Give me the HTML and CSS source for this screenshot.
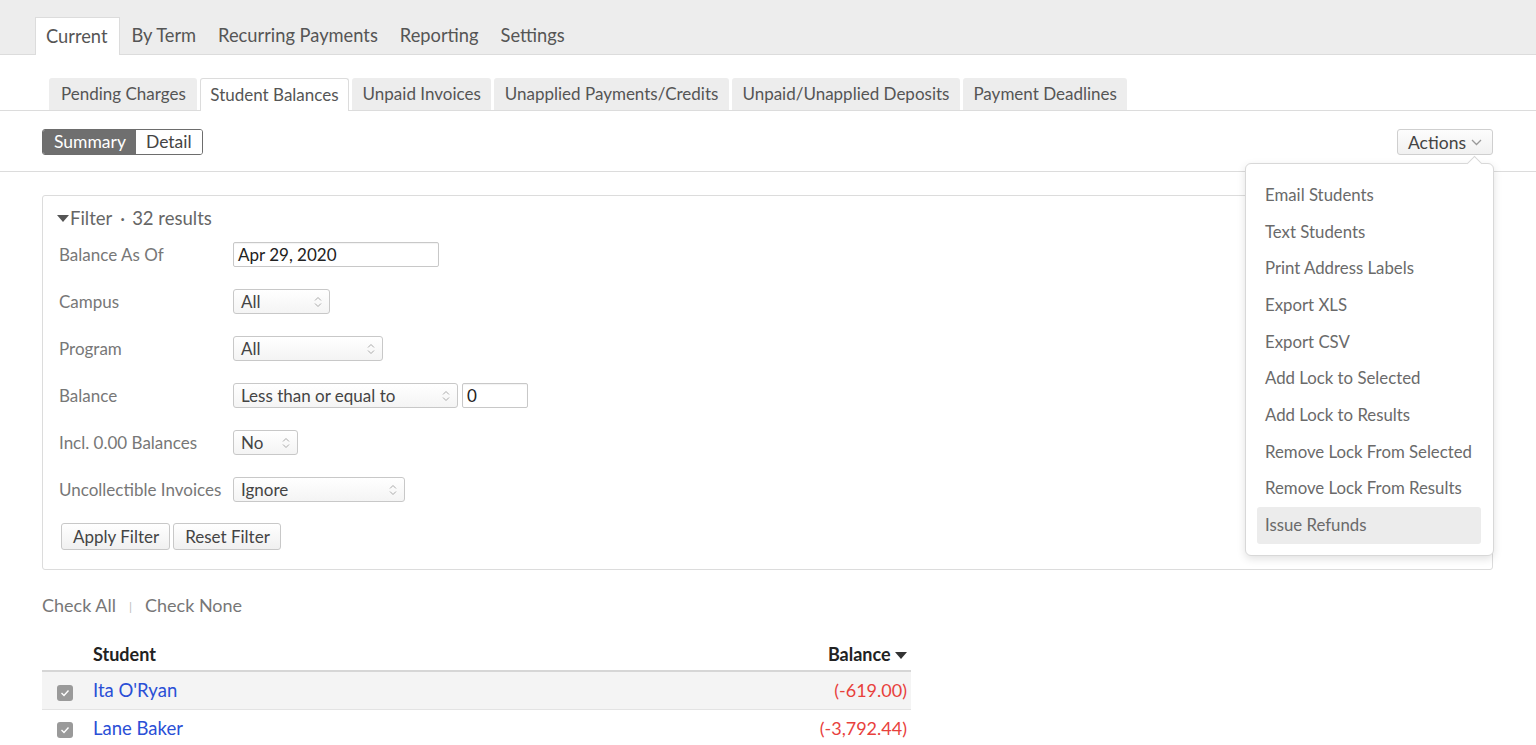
FILE: index.html
```html
<!DOCTYPE html>
<html lang="en">
<head>
<meta charset="utf-8">
<title>Student Balances</title>
<link rel="stylesheet" href="styles.css">
</head>
<body>
<header class="topbar">
  <nav class="main-tabs">
    <a class="main-tab active">Current</a>
    <a class="main-tab">By Term</a>
    <a class="main-tab">Recurring Payments</a>
    <a class="main-tab">Reporting</a>
    <a class="main-tab">Settings</a>
  </nav>
</header>

<nav class="sub-tabs">
  <a class="sub-tab">Pending Charges</a>
  <a class="sub-tab active">Student Balances</a>
  <a class="sub-tab">Unpaid Invoices</a>
  <a class="sub-tab">Unapplied Payments/Credits</a>
  <a class="sub-tab">Unpaid/Unapplied Deposits</a>
  <a class="sub-tab">Payment Deadlines</a>
</nav>

<div class="toolbar">
  <div class="toggle">
    <span class="toggle-opt on">Summary</span>
    <span class="toggle-opt">Detail</span>
  </div>
  <div class="actions">
    <button class="actions-btn">Actions
      <svg class="chev" width="11" height="7" viewBox="0 0 11 7"><path d="M1 1l4.5 4.5L10 1" fill="none" stroke="#999" stroke-width="1.3"/></svg>
    </button>
    <div class="menu">
      <span class="menu-arrow"></span>
      <a class="menu-item">Email Students</a>
      <a class="menu-item">Text Students</a>
      <a class="menu-item">Print Address Labels</a>
      <a class="menu-item">Export XLS</a>
      <a class="menu-item">Export CSV</a>
      <a class="menu-item">Add Lock to Selected</a>
      <a class="menu-item">Add Lock to Results</a>
      <a class="menu-item">Remove Lock From Selected</a>
      <a class="menu-item">Remove Lock From Results</a>
      <a class="menu-item hover">Issue Refunds</a>
    </div>
  </div>
</div>

<main class="content">
  <section class="filter">
    <div class="filter-head"><svg class="tri" width="12" height="7" viewBox="0 0 12 7"><path d="M0 0H12L6 7Z" fill="#555"/></svg>Filter <span class="dot">&middot;</span> 32 results</div>
    <div class="frow">
      <label class="flabel">Balance As Of</label>
      <div class="input date">Apr 29, 2020</div>
    </div>
    <div class="frow">
      <label class="flabel">Campus</label>
      <div class="select w96"><span>All</span><svg width="8" height="12" viewBox="0 0 8 12"><path d="M1 4.5L4 1.5L7 4.5M1 7.5L4 10.5L7 7.5" fill="none" stroke="#aaa" stroke-width="1"/></svg></div>
    </div>
    <div class="frow">
      <label class="flabel">Program</label>
      <div class="select w149"><span>All</span><svg width="8" height="12" viewBox="0 0 8 12"><path d="M1 4.5L4 1.5L7 4.5M1 7.5L4 10.5L7 7.5" fill="none" stroke="#aaa" stroke-width="1"/></svg></div>
    </div>
    <div class="frow">
      <label class="flabel">Balance</label>
      <div class="select w224"><span>Less than or equal to</span><svg width="8" height="12" viewBox="0 0 8 12"><path d="M1 4.5L4 1.5L7 4.5M1 7.5L4 10.5L7 7.5" fill="none" stroke="#aaa" stroke-width="1"/></svg></div>
      <div class="input num">0</div>
    </div>
    <div class="frow">
      <label class="flabel">Incl. 0.00 Balances</label>
      <div class="select w64"><span>No</span><svg width="8" height="12" viewBox="0 0 8 12"><path d="M1 4.5L4 1.5L7 4.5M1 7.5L4 10.5L7 7.5" fill="none" stroke="#aaa" stroke-width="1"/></svg></div>
    </div>
    <div class="frow">
      <label class="flabel">Uncollectible Invoices</label>
      <div class="select w171"><span>Ignore</span><svg width="8" height="12" viewBox="0 0 8 12"><path d="M1 4.5L4 1.5L7 4.5M1 7.5L4 10.5L7 7.5" fill="none" stroke="#aaa" stroke-width="1"/></svg></div>
    </div>
    <div class="fbuttons">
      <button class="btn">Apply Filter</button>
      <button class="btn">Reset Filter</button>
    </div>
  </section>

  <div class="checklinks">
    <a>Check All</a><span class="sep">|</span><a>Check None</a>
  </div>

  <table class="grid">
    <thead>
      <tr>
        <th class="c-check"></th>
        <th class="c-name">Student</th>
        <th class="c-bal">Balance <svg class="sort" width="12" height="7" viewBox="0 0 12 7"><path d="M0 0H12L6 7Z" fill="#333"/></svg></th>
      </tr>
    </thead>
    <tbody>
      <tr class="alt">
        <td class="c-check"><span class="cb"><svg width="10" height="8" viewBox="0 0 10 8"><path d="M1.5 4l2.5 2.5L8.5 1.5" fill="none" stroke="#fff" stroke-width="1.4"/></svg></span></td>
        <td class="c-name"><a class="student">Ita O'Ryan</a></td>
        <td class="c-bal neg">(-619.00)</td>
      </tr>
      <tr>
        <td class="c-check"><span class="cb"><svg width="10" height="8" viewBox="0 0 10 8"><path d="M1.5 4l2.5 2.5L8.5 1.5" fill="none" stroke="#fff" stroke-width="1.4"/></svg></span></td>
        <td class="c-name"><a class="student">Lane Baker</a></td>
        <td class="c-bal neg">(-3,792.44)</td>
      </tr>
    </tbody>
  </table>
</main>
</body>
</html>
```
FILE: styles.css
```css
* { box-sizing: border-box; }
html, body { margin: 0; padding: 0; }
body {
  font-family: Lato, "Open Sans", Arial, sans-serif;
  color: #555;
  background: #fff;
  overflow: hidden;
  height: 745px;
}
a { cursor: pointer; }

/* top bar */
.topbar {
  background: #ededed;
  border-bottom: 1px solid #dcdcdc;
  height: 55px;
  padding: 17px 0 0 35px;
}
.main-tabs { display: flex; }
.main-tab {
  font-size: 18.3px;
  color: #555;
  height: 38px;
  line-height: 36px;
  padding: 0 11px 0 11px;
}
.main-tab.active {
  background: #fff;
  border: 1px solid #dcdcdc;
  border-bottom: none;
  line-height: 36px;
  padding: 0 12px 0 10px;
}

/* sub tabs */
.sub-tabs {
  display: flex;
  gap: 3px;
  padding: 23px 0 0 49px;
  border-bottom: 1px solid #dcdcdc;
}
.sub-tab {
  font-size: 17px;
  color: #555;
  background: #ededed;
  height: 32px;
  line-height: 29px;
  padding: 0 9.5px;
  border-radius: 3px 3px 0 0;
  border: 1px solid #ededed;
  border-bottom: none;
}
.sub-tab:first-child { padding: 0 10px 0 11px; }
.sub-tab.active {
  background: #fff;
  border-color: #dcdcdc;
  height: 33px;
  line-height: 31px;
  margin-bottom: -1px;
}

/* toolbar */
.toolbar {
  display: flex;
  justify-content: space-between;
  align-items: flex-start;
  height: 61px;
  padding: 18px 43px 0 42px;
  border-bottom: 1px solid #dcdcdc;
}
.toggle {
  display: flex;
  border: 1px solid #6d6d6d;
  border-radius: 3px;
  height: 26px;
  overflow: hidden;
}
.toggle-opt {
  font-size: 17.5px;
  line-height: 24px;
  padding: 0 10px 0 10px;
  color: #444;
  background: #fff;
}
.toggle-opt.on {
  background: #6f6f6f;
  color: #fff;
  padding: 0 10px 0 11px;
}
.actions { position: relative; }
.actions-btn {
  font-family: inherit;
  font-size: 17.5px;
  color: #444;
  background: linear-gradient(#fdfdfd, #f1f1f1);
  border: 1px solid #cfcfcf;
  border-radius: 3px;
  height: 26px;
  width: 96px;
  padding: 0 0 0 10px;
  display: flex;
  align-items: center;
  gap: 5px;
}
.chev { margin-top: 1px; }
.menu {
  position: absolute;
  top: 34px;
  right: -1px;
  width: 249px;
  background: #fff;
  border: 1px solid #d8d8d8;
  border-radius: 6px;
  box-shadow: 0 3px 8px rgba(0,0,0,0.12);
  padding: 13px 12px 11px 11px;
  display: flex;
  flex-direction: column;
  z-index: 10;
}
.menu-arrow {
  position: absolute;
  top: -6px;
  right: 13px;
  width: 11px;
  height: 11px;
  background: #fff;
  border-left: 1px solid #d8d8d8;
  border-top: 1px solid #d8d8d8;
  transform: rotate(45deg);
}
.menu-item {
  font-size: 16.8px;
  color: #6a6a6a;
  height: 36.67px;
  line-height: 35px;
  padding-left: 8px;
  border-radius: 3px;
}
.menu-item.hover { background: #ececec; }

/* content */
.content { padding: 23px 43px 0 42px; }
.filter {
  border: 1px solid #dcdcdc;
  border-radius: 3px;
  height: 375px;
  padding: 9px 16px 0 16px;
}
.filter-head {
  font-size: 18.5px;
  color: #666;
  height: 26px;
  line-height: 26px;
  display: flex;
  align-items: center;
}
.tri { margin: 0 1px 0 -2px; }
.dot { padding: 0 7px 0 8px; }
.frow {
  display: flex;
  align-items: center;
  height: 47px;
}
.flabel {
  width: 174px;
  font-size: 17px;
  color: #777;
  flex: none;
}
.input {
  font-size: 17px;
  color: #222;
  border: 1px solid #c8c8c8;
  border-radius: 2px;
  height: 25px;
  line-height: 23px;
  padding: 0 4px;
  box-shadow: inset 0 1px 1px rgba(0,0,0,0.05);
}
.date { width: 206px; }
.num { width: 66px; margin-left: 4px; }
.select {
  display: flex;
  align-items: center;
  justify-content: space-between;
  font-size: 17px;
  color: #444;
  border: 1px solid #c8c8c8;
  border-radius: 3px;
  height: 25px;
  padding: 0 7px 0 7px;
  background: linear-gradient(#fff, #f4f4f4);
}
.w96 { width: 97px; }
.w149 { width: 150px; }
.w224 { width: 225px; }
.w64 { width: 65px; }
.w171 { width: 172px; }
.fbuttons {
  display: flex;
  gap: 3px;
  margin-top: 10px;
  padding-left: 2px;
}
.btn {
  font-family: inherit;
  font-size: 17px;
  color: #444;
  height: 27px;
  padding: 0 10px 0 11px;
  border: 1px solid #c8c8c8;
  border-radius: 3px;
  background: linear-gradient(#fff, #f0f0f0);
}

.checklinks {
  margin-top: 23px;
  font-size: 18px;
  color: #777;
  height: 24px;
  line-height: 24px;
}
.sep { color: #bbb; font-size: 12px; padding: 0 13px 0 13px; vertical-align: 1px; }

.grid {
  width: 869px;
  border-collapse: collapse;
  margin-top: 20px;
}
.grid th {
  font-size: 18px;
  font-weight: 700;
  color: #222;
  height: 34px;
  text-align: left;
  border-bottom: 2px solid #d6d6d6;
  padding: 0;
}
.grid td {
  height: 38px;
  padding: 0;
  font-size: 18px;
  border-bottom: 1px solid #e3e3e3;
}
.grid tr.alt td { background: #f4f4f4; }
.c-check { width: 51px; padding-left: 15px !important; }
.grid th.c-bal, .grid td.c-bal { text-align: right; padding-right: 4px; }
.sort { vertical-align: 2px; }
.neg { color: #e8413c; }
.student { color: #2a4fd6; font-size: 18.5px; }
.cb {
  display: inline-flex;
  align-items: center;
  justify-content: center;
  width: 16px;
  height: 16px;
  border-radius: 3px;
  background: #9a9a9a;
  vertical-align: middle;
}
```
